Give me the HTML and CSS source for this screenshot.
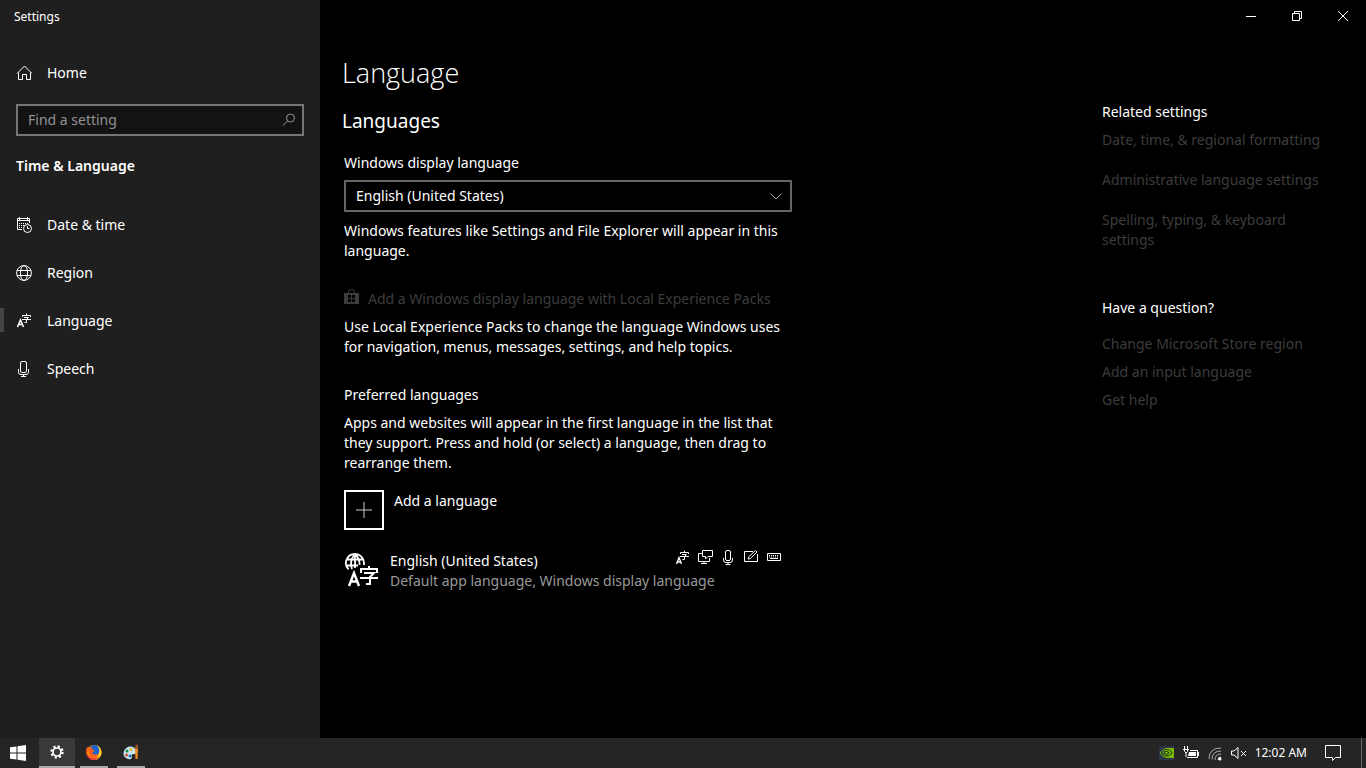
FILE: index.html
```
<!DOCTYPE html>
<html lang="en">
<head>
  <meta charset="UTF-8" />
  <meta name="viewport" content="width=device-width, initial-scale=1.0"/>
  <title>Settings</title>
  <link rel="stylesheet" href="styles.css">
</head>
<body>
  <div class="window">
    <aside class="sidebar">
      <div class="app-title">Settings</div>
      <a class="nav-item home" href="#">
        <svg class="icon" viewBox="0 0 16 16"><path d="M1 8.5L8.5 1L16 8.5M2.5 7.5V14.5H6.5V9.5H10.5V14.5H14.5V7.5"/></svg>
        Home
      </a>
      <div class="search">
        <input type="text" id="search" placeholder="Find a setting" aria-label="Find a setting" />
        <svg class="search-icon" viewBox="0 0 14 14"><circle cx="8.5" cy="5" r="4"/><path d="M5.5 8L1 12.5"/></svg>
      </div>
      <h2 class="category">Time &amp; Language</h2>
      <nav>
        <a class="nav-item" href="#">
          <svg class="icon" viewBox="0 0 16 16">
            <path d="M6 12.5H1.5V1.5H13.5V6M1.5 3.5H13.5M3.5 0V3M11.5 0V3"/>
            <path d="M3 6.5H12M3 8.5H8M3 10.5H6" stroke-dasharray="1 1"/>
            <circle cx="11.5" cy="11.5" r="4"/><path d="M11.5 9V11.5H13.5"/>
          </svg>
          Date &amp; time
        </a>
        <a class="nav-item" href="#">
          <svg class="icon" viewBox="0 0 16 16">
            <circle cx="8" cy="8" r="7.4"/><ellipse cx="8" cy="8" rx="3.6" ry="7.4"/><path d="M1 5.5H15M1 10.5H15"/>
          </svg>
          Region
        </a>
        <a class="nav-item active" href="#">
          <svg class="icon" viewBox="0 0 16 16"><path stroke-width="1.5" d="M1.5 14L4.5 7L7.5 14M2.5 11.5H6.5"/><path d="M10.500 .5V2M6.500 4V2.500H14.500V4M8 4.500H12.500L10.500 6.500V9.500H8.500M6 6.500H15"/></svg>
          Language
        </a>
        <a class="nav-item" href="#">
          <svg class="icon" viewBox="0 0 16 16"><rect x="4.5" y="0.5" width="6" height="11" rx="1.5"/><path d="M2.5 8V11.5Q2.5 13.5 5 13.5H10Q12.5 13.5 12.5 11.5V8M7.5 13.5V15.5M5 15.5H10"/></svg>
          Speech
        </a>
      </nav>
    </aside>

    <div class="content">
      <div class="window-controls">
        <button aria-label="Minimize"><svg viewBox="0 0 10 10"><path d="M0 5.5H10"/></svg></button>
        <button aria-label="Restore"><svg viewBox="0 0 10 10"><path d="M0.5 2.5H7.5V9.5H0.5ZM2.5 2.5V0.5H9.5V7.5H7.5"/></svg></button>
        <button aria-label="Close"><svg viewBox="0 0 10 10"><path d="M0 0L10 10M10 0L0 10"/></svg></button>
      </div>

      <div class="columns">
        <main>
          <h1>Language</h1>
          <h2 class="section-title">Languages</h2>

          <label for="display-language">Windows display language</label>
          <div class="select-box">
            <select id="display-language">
              <option>English (United States)</option>
            </select>
            <svg class="chevron" viewBox="0 0 12 7"><path d="M0.5 0.5L6 6L11.5 0.5"/></svg>
          </div>
          <p>Windows features like Settings and File Explorer will appear in this language.</p>

          <a class="store-link" href="#">
            <svg class="store-icon" viewBox="0 0 15 15">
              <path fill="currentColor" d="M0 4H15V15H0Z"/>
              <path stroke="currentColor" fill="none" d="M4.500 4V2.500Q4.500 .5 7.500 .5Q10.500 .5 10.500 2.500V4"/>
              <path fill="#000" d="M4 6H7V9H4ZM8 6H11V9H8ZM4 10H7V13H4ZM8 10H11V13H8Z"/>
            </svg>
            Add a Windows display language with Local Experience Packs
          </a>
          <p>Use Local Experience Packs to change the language Windows uses for navigation, menus, messages, settings, and help topics.</p>

          <h3 class="preferred">Preferred languages</h3>
          <p>Apps and websites will appear in the first language in the list that they support. Press and hold (or select) a language, then drag to rearrange them.</p>

          <button class="add-language">
            <span class="plus"><svg viewBox="0 0 16 16"><path d="M8 0V16M0 8H16"/></svg></span>
            Add a language
          </button>

          <div class="language">
            <svg class="language-icon" viewBox="0 0 34 34">
              <path stroke-width="1.800" d="M4.600 16.400A9 9 0 0 1 11 1A9 9 0 0 1 20 10V12M8 16Q5 8 11 1Q16 6 15.500 12M11 1V15M3 6.500H19M2 12.500H14"/>
              <path stroke-width="2.400" d="M5 33L10 20L15 33M7 28.500H13"/>
              <path d="M25 13V16M17 20V16H33V20M20 20H30L26 24V31H22M16 25H34"/>
            </svg>
            <div class="language-text">
              <div>English (United States)</div>
              <div class="muted">Default app language, Windows display language</div>
            </div>
            <div class="features">
              <svg viewBox="0 0 16 16"><path stroke-width="1.300" d="M2.5 15L5 8.5L7.500 15M3.500 13H6.500"/><path d="M10.500 1.500V3M6.500 5V3.500H14.500V5M8 5.500H12.500L10.500 7.500V10.500H8.500M6 7.500H15"/></svg>
              <svg viewBox="0 0 16 16"><path d="M5 4.500H1.500V12.500H12.500V9M4 14.500H10M7 12.500V14.500M5.500 1.500H15.500V7.500H11L8.500 10V7.500H5.500Z"/></svg>
              <svg viewBox="0 0 16 16"><rect x="5.500" y="1.500" width="5" height="10" rx="1.500"/><path d="M3.500 9V11Q3.500 13.500 6 13.500H10Q12.500 13.500 12.500 11V9M8 13.500V15.500M5.500 15.500H10.500"/></svg>
              <svg viewBox="0 0 16 16"><path d="M10 2.500H1.500V12.500H14.500V5M5 10L6 7.500L12.500 1.500L14 3L7.500 9.500Z"/></svg>
              <svg viewBox="0 0 16 16"><path d="M1.500 4.500H14.500V11.500H1.500ZM4 9.500H12"/><path d="M3 6.500H13M3 8H13" stroke-dasharray="1 1"/></svg>
            </div>
          </div>
        </main>

        <aside class="related">
          <h3>Related settings</h3>
          <ul class="spaced">
            <li><a href="#">Date, time, &amp; regional formatting</a></li>
            <li><a href="#">Administrative language settings</a></li>
            <li><a href="#">Spelling, typing, &amp; keyboard settings</a></li>
          </ul>
          <h3>Have a question?</h3>
          <ul class="help">
            <li><a href="#">Change Microsoft Store region</a></li>
            <li><a href="#">Add an input language</a></li>
            <li><a href="#">Get help</a></li>
          </ul>
        </aside>
      </div>
    </div>
  </div>

  <footer class="taskbar">
    <div class="apps">
      <button class="start" aria-label="Start"><svg viewBox="0 0 16 16"><path fill="#fff" d="M0 2.300L6.500 1.400V7.500H0ZM7.500 1.200L16 0V7.500H7.500ZM0 8.500H6.500V14.600L0 13.700ZM7.500 8.500H16V16L7.500 14.800Z"/></svg></button>
      <button class="current" aria-label="Settings">
        <svg viewBox="0 0 16 16"><circle cx="8" cy="8" r="5.500" stroke="#fff" stroke-width="2.400" stroke-dasharray="2.160 2.160" fill="none"/><circle cx="8" cy="8" r="4" stroke="#fff" stroke-width="1.700" fill="none"/></svg>
      </button>
      <button aria-label="Firefox">
        <svg viewBox="0 0 16 16">
          <circle cx="8" cy="8.500" r="7.500" fill="#ff9500"/>
          <path fill="#ffcf30" d="M11 1Q16 4 15.500 10Q14 15 9 16Q14 12 12 7Z"/>
          <path fill="#1d62d1" d="M4 3Q7 0 11 1.500Q14 4 13 9Q11 13 7 11Z"/>
          <path fill="#ff5b18" d="M1 3L3 4.500Q5 3 6 4L7 6L9 7L6 8.500Q7 11 10 10.500Q12 10 12 10Q10 14 6 13Q2 11 3 6Q1 8 1 11Q-1 7 1 3Z"/>
          <path fill="#f5333f" d="M.5 9Q3 14 8 14Q12 14 14 12Q11 16 7 16Q1 15 .5 9Z"/>
        </svg>
      </button>
      <button aria-label="Paint">
        <svg viewBox="0 0 16 16">
          <path fill="#c5e5f4" d="M1 7Q4 1 10 3Q14 5 13 9Q12 11 10 10Q8 10 9 13Q9 16 5 15Q-1 13 1 7Z"/>
          <circle cx="4" cy="7" r="1.500" fill="#258b42"/><circle cx="8" cy="5.500" r="1.500" fill="#e9b51e"/><circle cx="3.500" cy="11" r="1.500" fill="#de4936"/><circle cx="7" cy="12" r="1.500" fill="#2869b4"/>
          <path fill="#f08a24" d="M12 5H15L14.500 15H12.500Z"/><path fill="#9c572b" d="M12 5Q11 3 14 0Q16 3 15 5Z"/>
        </svg>
      </button>
    </div>
    <div class="tray">
      <svg viewBox="0 0 16 16"><path fill="#2b3548" d="M0 1H15V15H0Z"/><path fill="#76b900" d="M6 3H15V13H6Z"/><path stroke="#76b900" fill="none" d="M6 4Q3 5 1 8Q3 12 7 12M6 6Q4 7 3.500 8Q5 10 7 10"/><path stroke="#24340d" fill="none" d="M6 4.500Q11 4 13 8Q10 12 6 11M6 6.500Q9 6 10 8Q8 10 6 9"/></svg>
      <svg viewBox="0 0 16 16"><path stroke="#fff" fill="none" d="M4 12.500H14.500V5.500H7M15.500 7V11M1.500 1V4M4.500 1V4M0 4.500H6M1.500 4.500V6.500L3 8L4.500 6.500V4.500M3 8V12"/><path fill="#fff" d="M6 7H13V11H5Z"/></svg>
      <svg viewBox="0 0 16 16"><path stroke="#aaa" fill="none" d="M2 14Q2 3 14 3M5 14.500Q5 6 14 6M8 15Q8 9 14 9"/><path stroke="#fff" fill="none" d="M11 15Q11 12 14 12"/><circle cx="13" cy="14" r="1.500" fill="#fff"/></svg>
      <svg viewBox="0 0 16 16"><path stroke="#fff" fill="none" d="M.5 6V10H3L7 13.500V2.500L3 6ZM10 6L15 11M15 6L10 11"/></svg>
      <time class="clock">12:02 AM</time>
      <svg class="action" viewBox="0 0 18 18"><path stroke="#fff" fill="none" d="M1.500 1.500H16.500V13.500H11.500L8.500 16.500V13.500H1.500Z"/></svg>
    </div>
  </footer>
</body>
</html>
```
FILE: styles.css
```
* {
  box-sizing: border-box;
}

body {
  margin: 0;
  min-height: 100vh;
  display: flex;
  flex-direction: column;
  background: #000;
  color: #fff;
  font-family: "Segoe UI", "Noto Sans", sans-serif;
  font-size: 14px;
  line-height: 20px;
}

h1, h2, h3, p, ul {
  margin: 0;
  padding: 0;
  font-weight: normal;
}

h3 {
  font-size: 14px;
}

a {
  color: inherit;
  text-decoration: none;
}

button {
  border: none;
  padding: 0;
  background: none;
  color: inherit;
  font: inherit;
}

svg {
  display: block;
  flex: none;
}

.window {
  flex: 1;
  display: flex;
}

/* sidebar */
.sidebar {
  width: 320px;
  background: #1f1f1f;
}

.app-title {
  padding: 7px 14px;
  font-size: 12px;
}

.nav-item {
  position: relative;
  display: flex;
  align-items: center;
  gap: 15px;
  height: 48px;
  padding: 0 16px;
}

.home {
  height: 40px;
  margin-top: 19px;
}

.icon {
  width: 16px;
  height: 16px;
  fill: none;
  stroke: #fff;
}

.active::before {
  content: "";
  position: absolute;
  left: 0;
  top: 11px;
  width: 4px;
  height: 24px;
  background: #444;
}

.search {
  position: relative;
  margin: 11px 16px 20px;
}

.search input {
  display: block;
  width: 100%;
  height: 32px;
  padding: 0 32px 2px 10px;
  border: 2px solid #767676;
  background: #131313;
  color: #fff;
  font: inherit;
}

.search input::placeholder {
  color: #929292;
}

.search-icon {
  position: absolute;
  right: 8px;
  top: 9px;
  width: 14px;
  height: 14px;
  fill: none;
  stroke: #929292;
}

.category {
  margin: 0 16px 25px;
  font-size: 14px;
  font-weight: 600;
}

/* content */
.content {
  flex: 1;
}

.window-controls {
  display: flex;
  justify-content: flex-end;
}

.window-controls button {
  display: flex;
  align-items: center;
  justify-content: center;
  width: 46px;
  height: 32px;
}

.window-controls svg {
  width: 10px;
  height: 10px;
  fill: none;
  stroke: #fff;
}

.columns {
  display: flex;
  justify-content: space-between;
  gap: 24px;
  padding: 23px 34px 24px 24px;
}

main {
  width: 448px;
}

h1 {
  margin-left: -2px;
  font-family: "Segoe UI", "Open Sans", sans-serif;
  font-size: 27px;
  font-weight: 300;
  line-height: 36px;
}

.section-title {
  margin: 16px 0 18px -2px;
  font-size: 19px;
  line-height: 28px;
}

main label {
  display: block;
}

.select-box {
  position: relative;
  margin: 7px 0 9px;
}

.select-box select {
  display: block;
  width: 100%;
  height: 32px;
  padding: 0 10px;
  appearance: none;
  border: 2px solid #666;
  border-radius: 0;
  background: #000;
  color: #fff;
  font: inherit;
}

.chevron {
  position: absolute;
  right: 10px;
  top: 13px;
  width: 12px;
  height: 7px;
  fill: none;
  stroke: #aaa;
}

.store-link {
  display: flex;
  gap: 9px;
  margin: 28px 0 8px;
  color: #3c3c3c;
}

.store-icon {
  width: 15px;
  height: 15px;
}

.preferred {
  margin: 28px 0 8px;
}

.add-language {
  display: flex;
  gap: 10px;
  margin: 17px 0 21px;
  line-height: 22px;
}

.plus {
  display: flex;
  align-items: center;
  justify-content: center;
  width: 40px;
  height: 40px;
  border: 2px solid #fff;
}

.plus svg {
  width: 16px;
  height: 16px;
  stroke: #ccc;
}

.language {
  display: flex;
  position: relative;
  gap: 12px;
}

.language-icon {
  width: 34px;
  height: 34px;
  margin-top: 2px;
  fill: none;
  stroke: #fff;
  stroke-width: 2;
}

.muted {
  color: #999;
}

.features {
  position: absolute;
  top: -2px;
  right: 10px;
  display: flex;
  gap: 7px;
}

.features svg {
  width: 16px;
  height: 16px;
  fill: none;
  stroke: #fff;
}

.related {
  width: 230px;
  padding-top: 47px;
}

.related ul {
  display: grid;
  list-style: none;
  color: #3c3c3c;
}

.spaced {
  gap: 20px;
  margin: 8px 0 48px;
}

.help {
  gap: 8px;
  margin-top: 16px;
}

/* taskbar */
.taskbar {
  display: flex;
  justify-content: space-between;
  height: 30px;
  background: #252525;
}

.apps {
  display: flex;
  gap: 5px;
}

.apps button {
  display: flex;
  align-items: center;
  justify-content: center;
  width: 36px;
  border-bottom: 2px solid #aaa;
}

.apps button:nth-child(n+3) {
  width: 28px;
  margin-right: 4px;
}

.apps .start {
  width: 34px;
  padding-left: 2px;
  border-bottom: none;
}

.apps .current {
  background: #393939;
}

.apps svg {
  width: 16px;
  height: 16px;
}

.tray {
  display: flex;
  align-items: center;
  gap: 8px;
  margin-right: 4px;
  padding-right: 19px;
  border-right: 1px solid #666;
}

.tray svg {
  width: 16px;
  height: 16px;
}

.clock {
  margin-right: 9px;
  font-size: 12px;
}

.tray .action {
  width: 18px;
  height: 18px;
}
```
